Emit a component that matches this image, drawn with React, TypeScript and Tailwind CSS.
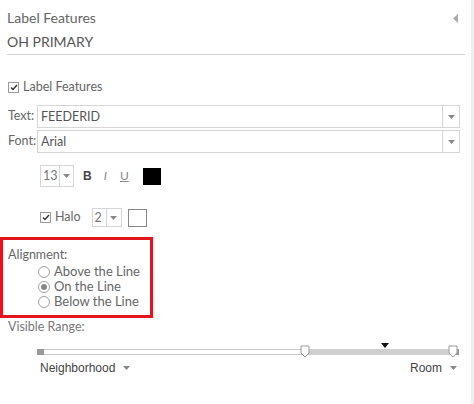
import React, { useState } from 'react';

const font = { fontFamily: 'Lato, "Open Sans", sans-serif' };

const Caret: React.FC<{ className?: string }> = ({ className }) => (
  <svg width="7" height="4" viewBox="0 0 7 4" className={className}>
    <path d="M0 0h7L3.5 4z" fill="#888" />
  </svg>
);

const Check: React.FC<{ checked: boolean }> = ({ checked }) => (
  <span className="flex h-[11px] w-[11px] items-center justify-center border border-[#9a9a9a] bg-white">
    {checked && (
      <svg width="8" height="7" viewBox="0 0 8 7">
        <path d="M1 3.5l2 2L7 1" fill="none" stroke="#333" strokeWidth="1.4" />
      </svg>
    )}
  </span>
);

const Radio: React.FC<{ checked: boolean; label: string; onClick: () => void }> = ({ checked, label, onClick }) => (
  <div className="flex h-[15px] items-center gap-[4px] cursor-pointer" onClick={onClick}>
    <span className="flex h-[12px] w-[12px] items-center justify-center rounded-full border border-[#a0a0a0] bg-white">
      {checked && <span className="h-[6px] w-[6px] rounded-full bg-[#888]" />}
    </span>
    <span className="text-[13px] text-[#666]">{label}</span>
  </div>
);

const Handle: React.FC<{ left: number }> = ({ left }) => (
  <svg
    width="10"
    height="13"
    viewBox="0 0 10 13"
    className="absolute top-[-4px]"
    style={{ left }}
  >
    <path d="M1 1h8v7l-4 4-4-4z" fill="#fff" stroke="#999" />
  </svg>
);

const App: React.FC = () => {
  const [labelOn, setLabelOn] = useState(true);
  const [halo, setHalo] = useState(true);
  const [align, setAlign] = useState('on');

  return (
    <div className="flex h-[404px] w-[474px] bg-white" style={font}>
      <div className="flex w-[471px] flex-col px-[7px] pt-[10px]">
        <div className="flex items-center justify-between pr-[6px]">
          <span className="h-[16px] text-[14px] leading-[16px] text-[#666]">Label Features</span>
          <svg width="5" height="9" viewBox="0 0 5 9">
            <path d="M5 0v9L0 4.5z" fill="#aaa" />
          </svg>
        </div>
        <div className="mt-[8px] w-[458px] border-b border-[#cfcfcf] pb-[4px]">
          <div className="h-[16px] text-[14px] leading-[16px] text-[#555]">OH PRIMARY</div>
        </div>

        <label className="mt-[24px] flex h-[16px] items-center gap-[4px] pl-[1px]" onClick={() => setLabelOn(!labelOn)}>
          <Check checked={labelOn} />
          <span className="text-[12.5px] text-[#666]">Label Features</span>
        </label>

        <div className="mt-[10px] flex flex-col gap-[2px]">
          {[
            ['Text:', 'FEEDERID'],
            ['Font:', 'Arial'],
          ].map(([lbl, val]) => (
            <div key={lbl} className="flex h-[23px] items-center">
              <span className="w-[30px] pl-[1px] text-[12.5px] text-[#666]">{lbl}</span>
              <div className="flex h-full w-[423px] border border-[#d6d6d6]">
                <span className="flex-1 pl-[3px] text-[12.5px] leading-[21px] text-[#555]">{val}</span>
                <span className="flex w-[17px] items-center justify-center border-l border-[#d6d6d6]">
                  <Caret />
                </span>
              </div>
            </div>
          ))}
        </div>

        <div className="ml-[33px] mt-[12px] flex h-[22px] items-center">
          <div className="flex h-full w-[34px] border border-[#d6d6d6]">
            <span className="w-[18px] pl-[2px] text-[12.5px] leading-[20px] text-[#777]">13</span>
            <span className="flex flex-1 items-center justify-center border-l border-[#d6d6d6]">
              <Caret />
            </span>
          </div>
          <span
            className="ml-[9px] text-[12px] font-bold text-[#444]"
            style={{ fontFamily: '"Liberation Sans", Arial, sans-serif' }}
          >
            B
          </span>
          <span className="ml-[12px] text-[12px] italic text-[#888]">I</span>
          <span className="ml-[13px] text-[12px] text-[#888] underline">U</span>
          <span className="ml-[14px] h-[17px] w-[18px] bg-black" />
        </div>

        <div className="ml-[33px] mt-[21px] flex h-[19px] items-center">
          <label className="flex items-center gap-[4px]" onClick={() => setHalo(!halo)}>
            <Check checked={halo} />
            <span className="text-[12.5px] text-[#666]">Halo</span>
          </label>
          <div className="ml-[11px] flex h-full w-[30px] border border-[#d6d6d6]">
            <span className="w-[13px] pl-[2px] text-[12.5px] leading-[17px] text-[#777]">2</span>
            <span className="flex flex-1 items-center justify-center border-l border-[#d6d6d6]">
              <Caret />
            </span>
          </div>
          <span className="ml-[6px] h-[18px] w-[19px] border border-[#888] bg-white" />
        </div>

        <div className="-ml-[7px] mt-[10px] flex h-[81px] w-[153px] flex-col border-[3px] border-[#e2141e] pl-[5px] pt-[8px]">
          <span className="h-[14px] text-[12.5px] leading-[14px] text-[#666]">Alignment:</span>
          <div className="ml-[30px] mt-[2px] flex flex-col">
            <Radio checked={align === 'above'} label="Above the Line" onClick={() => setAlign('above')} />
            <Radio checked={align === 'on'} label="On the Line" onClick={() => setAlign('on')} />
            <Radio checked={align === 'below'} label="Below the Line" onClick={() => setAlign('below')} />
          </div>
        </div>

        <span className="mt-[2px] h-[14px] pl-[1px] text-[12.5px] leading-[14px] text-[#777]">Visible Range:</span>

        <div className="ml-[30px] mt-[15px] w-[422px]">
          <div className="relative h-[6px]">
            <div className="absolute inset-0 border border-[#c8c8c8] bg-white" />
            <div className="absolute left-[267px] right-[7px] top-0 h-[6px] bg-[#cfcfcf]" />
            <div className="absolute left-0 top-0 h-[6px] w-[7px] bg-[#9a9a9a]" />
            <div className="absolute right-0 top-0 h-[6px] w-[5px] bg-[#9a9a9a]" />
            <svg width="8" height="5" viewBox="0 0 8 5" className="absolute left-[344px] top-[-6px]">
              <path d="M0 0h8L4 5z" fill="#111" />
            </svg>
            <Handle left={263} />
            <Handle left={411} />
          </div>
          <div
            className="mt-[4px] flex items-center justify-between pl-[3px] pr-[2px] text-[12px] text-[#444]"
            style={{ fontFamily: '"Liberation Sans", Arial, sans-serif' }}
          >
            <span className="flex items-center gap-[8px]">
              Neighborhood <Caret />
            </span>
            <span className="flex items-center gap-[8px]">
              Room <Caret />
            </span>
          </div>
        </div>
      </div>
      <div className="w-[3px] bg-[#efefef]" />
    </div>
  );
};

export default App;
